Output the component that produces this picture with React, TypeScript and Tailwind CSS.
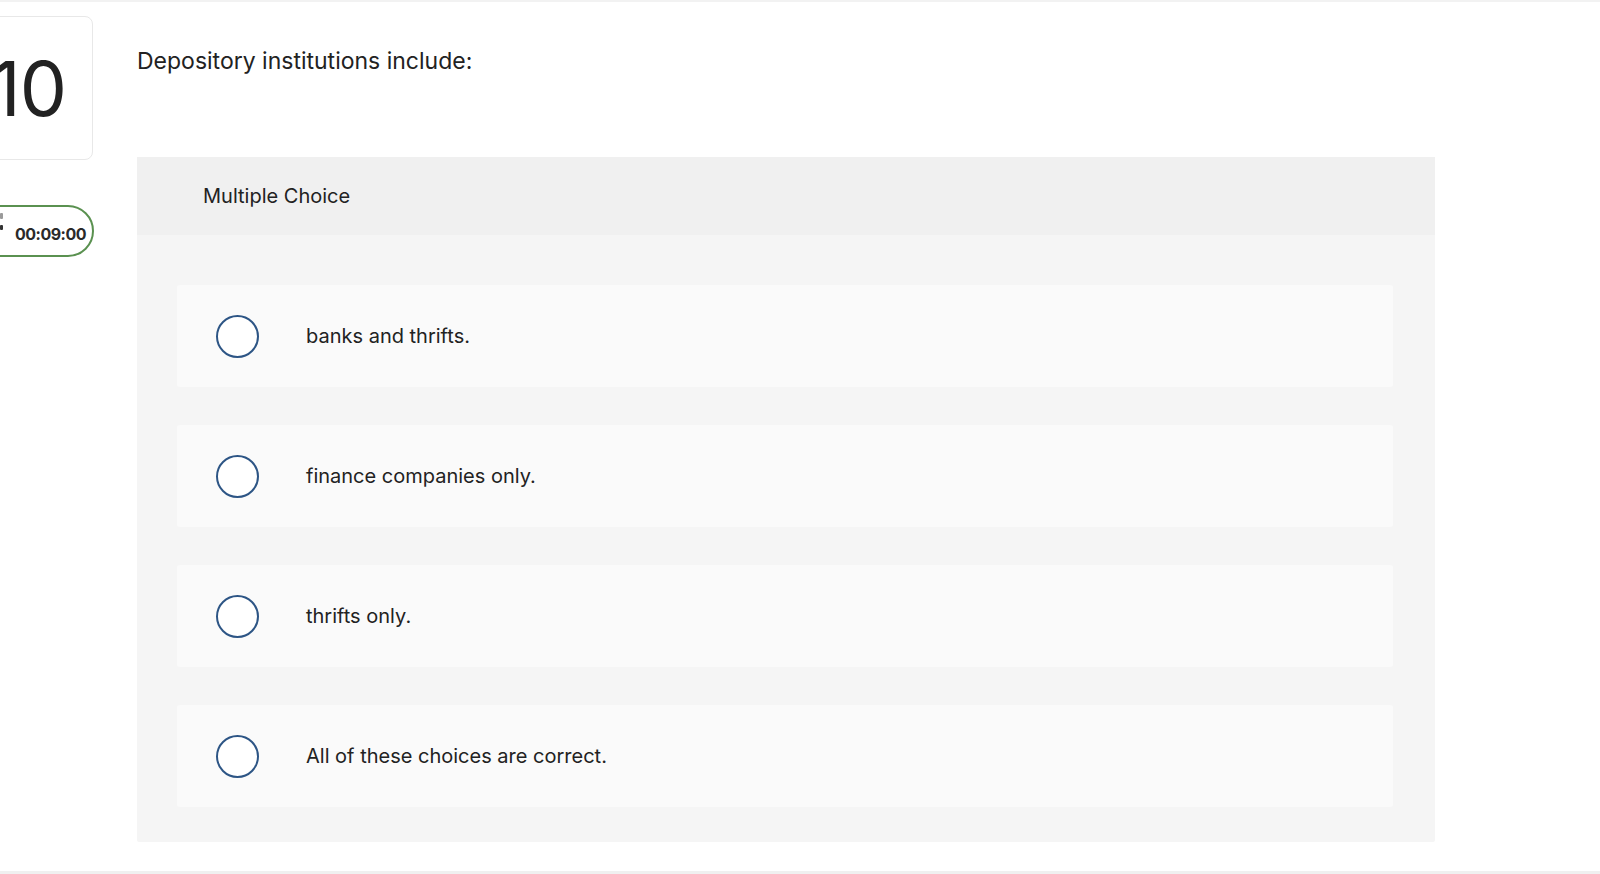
import React from "react";

const options = [
  "banks and thrifts.",
  "finance companies only.",
  "thrifts only.",
  "All of these choices are correct.",
];

export default function App() {
  return (
    <div
      className="relative w-[1600px] h-[874px] bg-white overflow-hidden text-[#222]"
      style={{ fontFamily: "Inter, 'Liberation Sans', sans-serif" }}
    >
      <div className="h-[2px] bg-[#f2f2f2]" />
      <div className="flex pt-[14px]">
        {/* left column */}
        <div className="w-[93px] flex flex-col shrink-0">
          <div className="h-[144px] ml-[-20px] w-[113px] border border-[#e8e8e8] rounded-[8px] flex items-center justify-end pr-[26px]">
            <span className="text-[75px] leading-none tracking-[-1px] text-[#222]">10</span>
          </div>
          <div className="mt-[45px] ml-[-40px] w-[134px] h-[52px] border-2 border-[#5a9150] rounded-[26px] flex items-start pl-[31px]">
            <svg width="12" height="30" viewBox="0 0 12 30" className="mr-[10px] shrink-0">
              <rect x="7" y="6" width="3" height="6" rx="1" fill="#9a9a9a" />
              <rect x="7" y="18" width="3" height="5" rx="1" fill="#333" />
            </svg>
            <span className="text-[#2a2a2a] text-[16px] leading-[48px] font-bold tracking-[-0.5px] mt-[3px]">00:09:00</span>
          </div>
        </div>
        {/* main column */}
        <div className="ml-[44px] w-[1298px]">
          <h1 className="text-[23px] leading-[30px] mt-[30px] text-[#222]">Depository institutions include:</h1>
          <div className="mt-[81px] bg-[#f5f5f5] rounded-[2px]">
            <div className="h-[78px] bg-[#f0f0f0] flex items-center pl-[66px]">
              <span className="text-[20px] text-[#222]">Multiple Choice</span>
            </div>
            <div className="pt-[50px] pb-[35px] pl-[40px] pr-[42px] flex flex-col gap-[38px]">
              {options.map((o) => (
                <div key={o} className="h-[102px] bg-[#fafafa] rounded-[3px] flex items-center pl-[39px]">
                  <div className="w-[43px] h-[43px] rounded-full border-2 border-[#2d5585] bg-white shrink-0" />
                  <span className="ml-[47px] text-[20px] text-[#222]">{o}</span>
                </div>
              ))}
            </div>
          </div>
        </div>
      </div>
      <div className="absolute left-0 top-[871px] w-[1600px] h-[3px] bg-[#f0f0f0]" />
    </div>
  );
}
